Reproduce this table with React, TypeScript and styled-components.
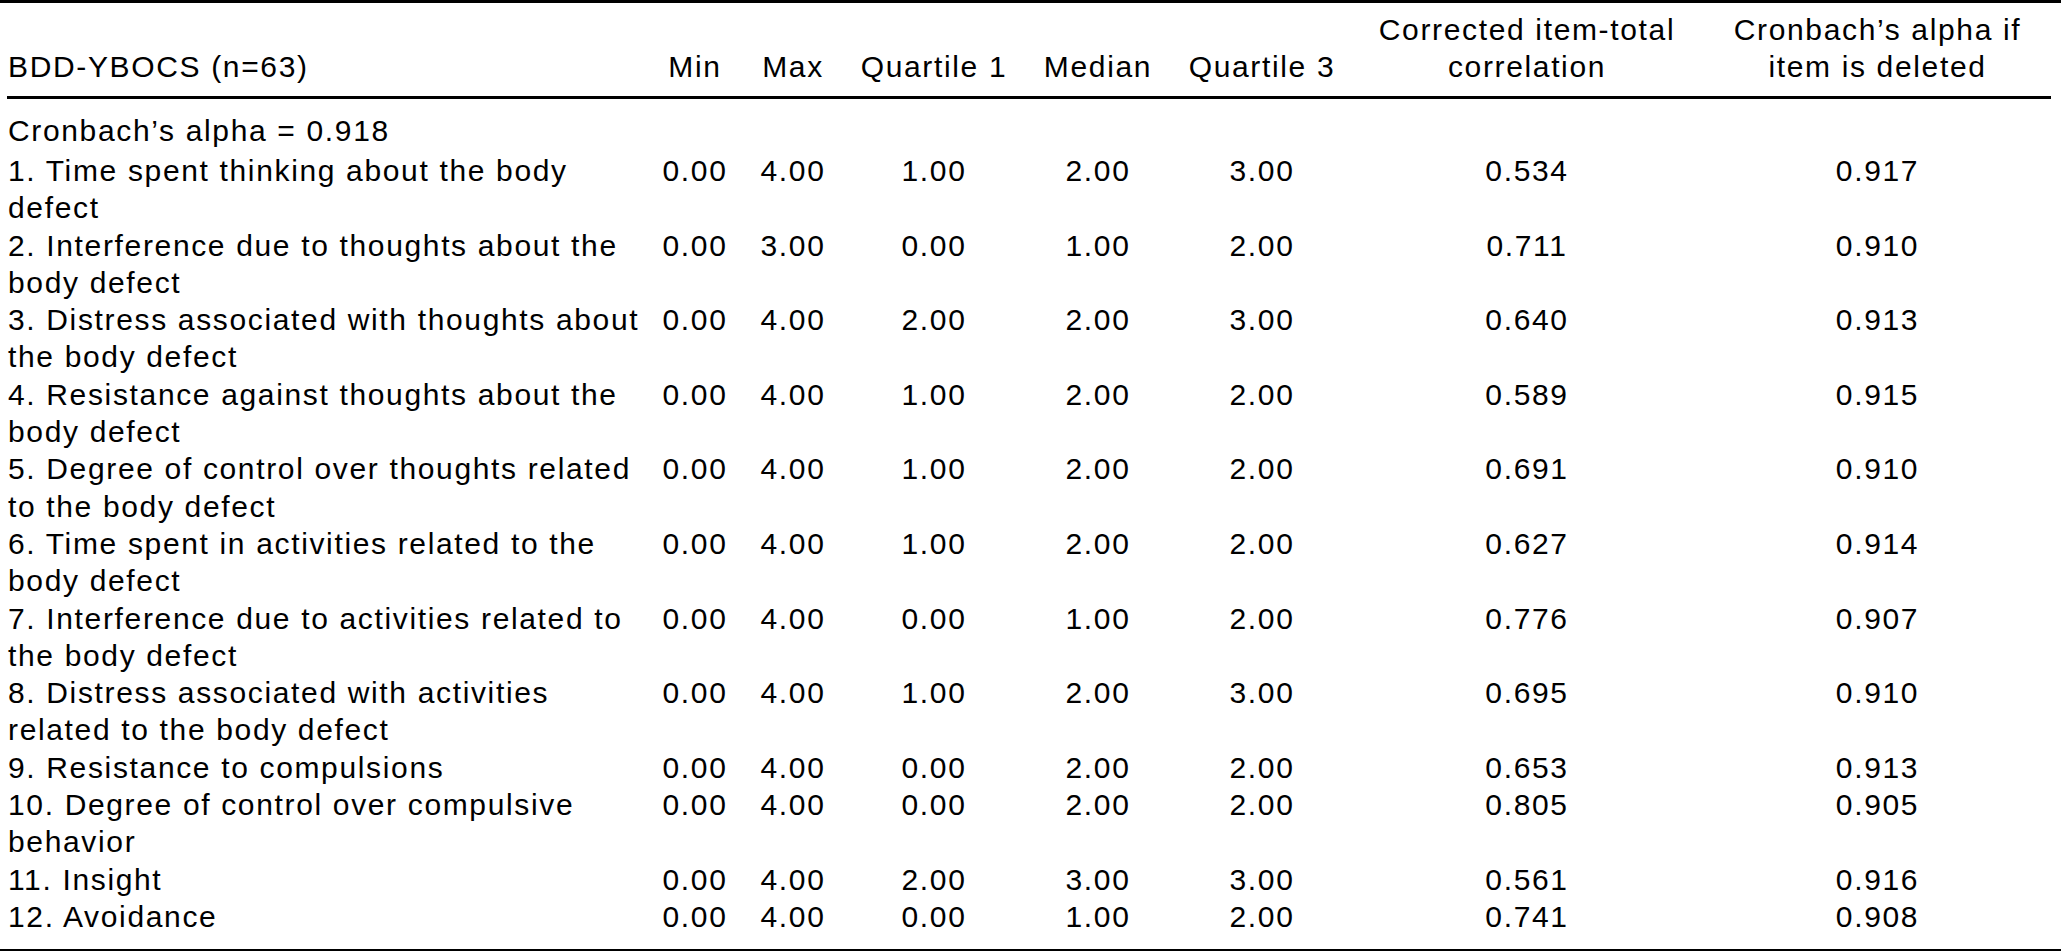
import React from 'react';
import styled, { createGlobalStyle } from 'styled-components';

type Item = {
  label: string[]
  values: string[]
};

const columns = ['Min', 'Max', 'Quartile 1', 'Median', 'Quartile 3'];

const items: Item[] = [
  { label: ['1. Time spent thinking about the body', 'defect'], values: ['0.00', '4.00', '1.00', '2.00', '3.00', '0.534', '0.917'] },
  { label: ['2. Interference due to thoughts about the', 'body defect'], values: ['0.00', '3.00', '0.00', '1.00', '2.00', '0.711', '0.910'] },
  { label: ['3. Distress associated with thoughts about', 'the body defect'], values: ['0.00', '4.00', '2.00', '2.00', '3.00', '0.640', '0.913'] },
  { label: ['4. Resistance against thoughts about the', 'body defect'], values: ['0.00', '4.00', '1.00', '2.00', '2.00', '0.589', '0.915'] },
  { label: ['5. Degree of control over thoughts related', 'to the body defect'], values: ['0.00', '4.00', '1.00', '2.00', '2.00', '0.691', '0.910'] },
  { label: ['6. Time spent in activities related to the', 'body defect'], values: ['0.00', '4.00', '1.00', '2.00', '2.00', '0.627', '0.914'] },
  { label: ['7. Interference due to activities related to', 'the body defect'], values: ['0.00', '4.00', '0.00', '1.00', '2.00', '0.776', '0.907'] },
  { label: ['8. Distress associated with activities', 'related to the body defect'], values: ['0.00', '4.00', '1.00', '2.00', '3.00', '0.695', '0.910'] },
  { label: ['9. Resistance to compulsions'], values: ['0.00', '4.00', '0.00', '2.00', '2.00', '0.653', '0.913'] },
  { label: ['10. Degree of control over compulsive', 'behavior'], values: ['0.00', '4.00', '0.00', '2.00', '2.00', '0.805', '0.905'] },
  { label: ['11. Insight'], values: ['0.00', '4.00', '2.00', '3.00', '3.00', '0.561', '0.916'] },
  { label: ['12. Avoidance'], values: ['0.00', '4.00', '0.00', '1.00', '2.00', '0.741', '0.908'] }
];

const GlobalStyle = createGlobalStyle`
  html, body {
    margin: 0;
    padding: 0;
    background: #fff;
  }
  body {
    font-family: "Liberation Sans", Arial, Helvetica, sans-serif;
    color: #000;
  }
`;

const App = () => (
  <>
    <GlobalStyle />
    <Table>
      <Head>
        <LabelCell><Line>BDD-YBOCS (n=63)</Line></LabelCell>
        {columns.map((title) => (
          <HeadCell key={title}><Line>{title}</Line></HeadCell>
        ))}
        <HeadCell>
          <Line>Corrected item-total</Line>
          <Line>correlation</Line>
        </HeadCell>
        <HeadCell>
          <Line>Cronbach’s alpha if</Line>
          <Line>item is deleted</Line>
        </HeadCell>
      </Head>
      <Body>
        <AlphaRow>
          <LabelCell><Line>Cronbach’s alpha = 0.918</Line></LabelCell>
        </AlphaRow>
        {items.map((item) => (
          <Row key={item.label[0]}>
            <LabelCell>
              {item.label.map((line) => <Line key={line}>{line}</Line>)}
            </LabelCell>
            {item.values.map((value, i) => (
              <ValueCell key={i}><Line>{value}</Line></ValueCell>
            ))}
          </Row>
        ))}
      </Body>
    </Table>
  </>
);

const gridColumns = '643px 90px 106px 176px 152px 176px 354px 347px';

const Table = styled.div`
  width: 2061px;
  height: 951px;
  box-sizing: border-box;
  border-top: 3px solid #000;
  border-bottom: 2px solid #000;
  display: flex;
  flex-direction: column;
  font-size: 30px;
  line-height: 37.3px;
  letter-spacing: 1.65px;
`;

const Head = styled.div`
  display: grid;
  grid-template-columns: ${gridColumns};
  align-items: end;
  margin: 0 10px 0 7px;
  padding: 8px 0 10px;
  border-bottom: 3px solid #000;
`;

const Body = styled.div`
  display: flex;
  flex-direction: column;
  margin: 0 10px 0 7px;
  padding-top: 13.4px;
`;

const Row = styled.div`
  display: grid;
  grid-template-columns: ${gridColumns};
  align-items: start;
`;

const AlphaRow = styled(Row)`
  padding-bottom: 2.7px;
`;

const Line = styled.span`
  display: block;
  white-space: nowrap;
`;

const LabelCell = styled.div`
  padding-left: 1px;
  text-align: left;
`;

const HeadCell = styled.div`
  text-align: center;
`;

const ValueCell = styled.div`
  text-align: center;
`;

export default App;
